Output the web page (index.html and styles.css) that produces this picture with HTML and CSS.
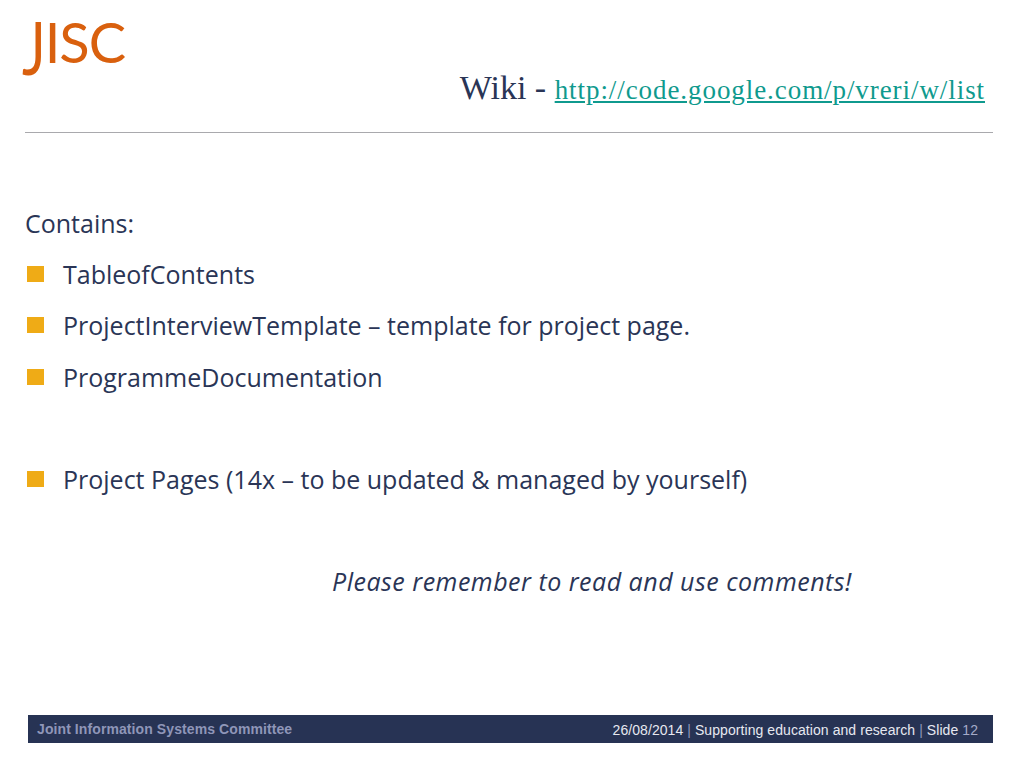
FILE: index.html
```html
<!DOCTYPE html>
<html lang="en">
<head>
  <meta charset="UTF-8">
  <title>Wiki</title>
  <link rel="stylesheet" href="styles.css">
</head>
<body>
  <div class="slide">
    <div class="header">
      <div class="logo"><span class="logo-j">J</span>ISC</div>
      <h1 class="title">Wiki - <a href="#">http://code.google.com/p/vreri/w/list</a></h1>
    </div>

    <div class="content">
      <p class="intro">Contains:</p>
      <ul class="bullets">
        <li>TableofContents</li>
        <li>ProjectInterviewTemplate – template for project page.</li>
        <li>ProgrammeDocumentation</li>
        <li class="spaced">Project Pages (14x – to be updated &amp; managed by yourself)</li>
      </ul>
      <p class="note">Please remember to read and use comments!</p>
    </div>

    <div class="footer">
      <span class="org">Joint Information Systems Committee</span>
      <span class="meta">26/08/2014 <i>|</i> Supporting education and research <i>|</i> Slide <b>12</b></span>
    </div>
  </div>
</body>
</html>
```

FILE: styles.css
```css
html, body {
  margin: 0;
  padding: 0;
  background: #fff;
}

.slide {
  width: 1024px;
  height: 768px;
  box-sizing: border-box;
  padding: 0 31px 0 25px;
  display: flex;
  flex-direction: column;
  overflow: hidden;
  color: #2a3556;
  font-family: "Open Sans", sans-serif;
}

.header {
  height: 133px;
  box-sizing: border-box;
  border-bottom: 1px solid #a9a9ad;
  display: flex;
  justify-content: space-between;
}

.logo {
  font-family: "Lato", sans-serif;
  font-weight: 400;
  font-size: 56px;
  line-height: 56px;
  margin: 14px 0 0 -3px;
  letter-spacing: -1px;
  color: #d9600e;
}

.logo-j {
  display: inline-block;
  transform: scaleY(1.32);
  transform-origin: 50% 13px;
}

.title {
  margin: 65px 8px 0 0;
  font-family: "Liberation Serif", serif;
  font-weight: normal;
  font-size: 34px;
  line-height: 46px;
  height: 46px;
  color: #2a3556;
}

.title a {
  font-size: 27px;
  letter-spacing: 0.93px;
  color: #0f9a8e;
}

.content {
  flex: 1;
  font-size: 25px;
  line-height: 33px;
}

.intro {
  margin: 74px 0 0;
}

.bullets {
  list-style: none;
  margin: 18px 0 0;
  padding: 0;
  display: flex;
  flex-direction: column;
  gap: 18.4px;
}

.bullets li {
  position: relative;
  padding-left: 38px;
}

.bullets li::before {
  content: "";
  position: absolute;
  left: 2px;
  top: 8px;
  width: 17px;
  height: 16px;
  background: #efab16;
}

.bullets .spaced {
  margin-top: 51px;
}

.note {
  margin: 69px 0 0 307px;
  font-style: italic;
  letter-spacing: 0.5px;
}

.footer {
  height: 28px;
  margin: 0 0 25px 3px;
  padding: 0 15px 0 9px;
  display: flex;
  justify-content: space-between;
  align-items: center;
  background: #273354;
  font-family: "Liberation Sans", sans-serif;
}

.org {
  font-size: 14px;
  font-weight: bold;
  letter-spacing: 0.09px;
  color: #8f96b8;
}

.meta {
  font-size: 14px;
  letter-spacing: 0.07px;
  color: #e6e8f0;
  padding-top: 2px;
}

.meta i {
  font-style: normal;
  color: #8f96b8;
}

.meta b {
  font-weight: normal;
  color: #a5abc8;
}
```
